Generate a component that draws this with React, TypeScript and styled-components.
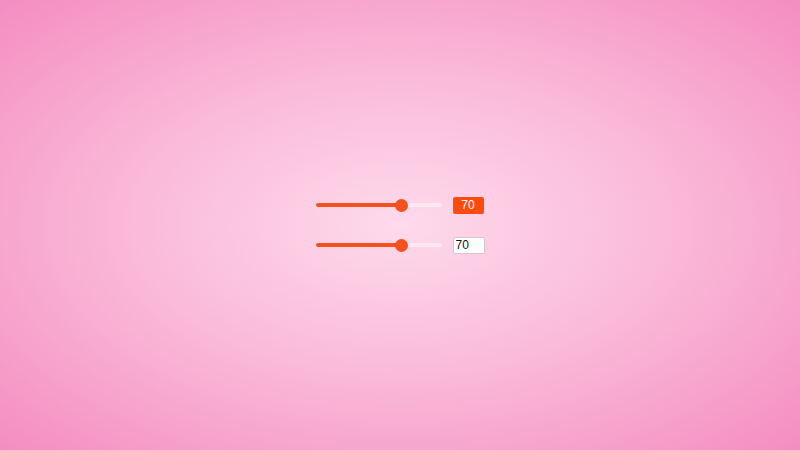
import React, { useState } from "react";
import styled, { createGlobalStyle } from "styled-components";

const ACCENT = "#f4511e";
const TRACK = "#fbe8f1";
const THUMB = 13;
const TRACK_W = 126;

const GlobalStyle = createGlobalStyle`
  html, body {
    margin: 0;
    height: 100%;
  }
  body {
    font-family: "Liberation Sans", Arial, sans-serif;
    background: radial-gradient(ellipse at center, #fedaeb 0%, #fab9d8 48%, #f48dc1 100%);
  }
  #root {
    height: 100%;
  }
`;

const Stage = styled.main`
  height: 100vh;
  display: flex;
  align-items: center;
  justify-content: center;
`;

const Stack = styled.div`
  display: flex;
  flex-direction: column;
  gap: 23px;
`;

const Row = styled.div`
  display: flex;
  align-items: center;
  gap: 11px;
  height: 17px;
`;

const Range = styled.input.attrs({ type: "range" })`
  -webkit-appearance: none;
  appearance: none;
  width: ${TRACK_W}px;
  height: 4px;
  margin: 0;
  border-radius: 2px;
  outline: none;
  cursor: pointer;

  &::-webkit-slider-thumb {
    -webkit-appearance: none;
    width: ${THUMB}px;
    height: ${THUMB}px;
    border-radius: 50%;
    background: ${ACCENT};
    border: none;
  }

  &::-moz-range-thumb {
    width: ${THUMB}px;
    height: ${THUMB}px;
    border-radius: 50%;
    background: ${ACCENT};
    border: none;
  }
`;

const Badge = styled.span`
  width: 31px;
  height: 17px;
  display: flex;
  align-items: center;
  justify-content: center;
  background: #ff4a0d;
  color: #fff;
  font-size: 12px;
  border-radius: 2px;
`;

const NumberField = styled.input`
  width: 32px;
  height: 17px;
  box-sizing: border-box;
  padding: 0 2px;
  border: 1px solid #cfc8cc;
  border-radius: 2px;
  background: #fff;
  color: #111;
  font-family: "Liberation Sans", Arial, sans-serif;
  font-size: 12px;
  outline: none;
  -moz-appearance: textfield;

  &::-webkit-inner-spin-button,
  &::-webkit-outer-spin-button {
    -webkit-appearance: none;
    margin: 0;
  }
`;

// fill stops at the thumb centre, which travels inside (width - thumb)
const fillStyle = (v: number) => {
  const px = THUMB / 2 + (v / 100) * (TRACK_W - THUMB);
  const pct = (px / TRACK_W) * 100;
  return {
    background: `linear-gradient(to right, ${ACCENT} 0%, ${ACCENT} ${pct}%, ${TRACK} ${pct}%, ${TRACK} 100%)`,
  };
};

const App: React.FC = () => {
  const [value, setValue] = useState(70);

  const onSlide = (e: React.ChangeEvent<HTMLInputElement>) =>
    setValue(Number(e.target.value));

  const onType = (e: React.ChangeEvent<HTMLInputElement>) => {
    const n = Math.max(0, Math.min(100, Number(e.target.value) || 0));
    setValue(n);
  };

  return (
    <>
      <GlobalStyle />
      <Stage>
        <Stack>
          <Row>
            <Range min={0} max={100} value={value} onChange={onSlide} style={fillStyle(value)} />
            <Badge>{value}</Badge>
          </Row>
          <Row>
            <Range min={0} max={100} value={value} onChange={onSlide} style={fillStyle(value)} />
            <NumberField type="number" value={value} onChange={onType} />
          </Row>
        </Stack>
      </Stage>
    </>
  );
};

export default App;
